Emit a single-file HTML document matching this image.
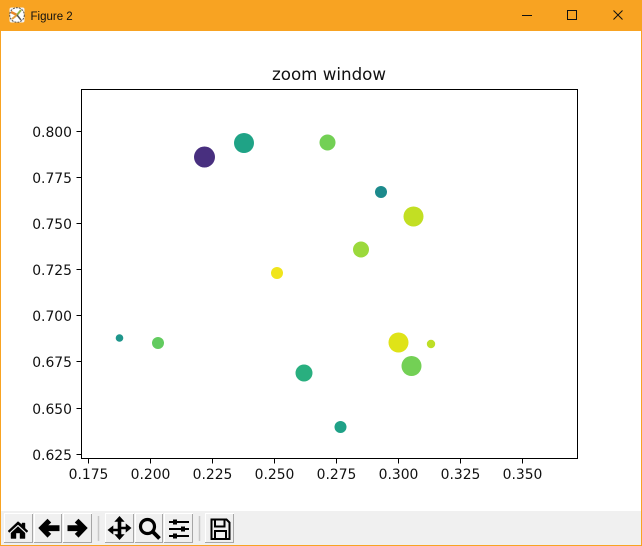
<!DOCTYPE html>
<html><head><meta charset="utf-8"><style>
html,body{margin:0;padding:0;background:#fff;width:642px;height:546px;overflow:hidden}
svg{display:block}
text{font-family:"DejaVu Sans",sans-serif;fill:#111}
</style></head><body>
<svg width="642" height="546" viewBox="0 0 642 546" xmlns="http://www.w3.org/2000/svg">
<rect width="642" height="546" fill="#fff"/>
<rect width="642" height="31" fill="#f8a322"/>
<!-- window icon -->
<g>
<rect x="9.500" y="7.500" width="15" height="15" rx="2" fill="#f4f4f4"/>
<circle cx="17" cy="15" r="7.300" fill="#fff" stroke="#555" stroke-width="1" stroke-dasharray="2 1"/>
<path d="M17 15L11 12" stroke="#e8862a" stroke-width="2.500"/>
<path d="M17 15L21 10" stroke="#8fb04a" stroke-width="2"/>
<path d="M17 15L12 19" stroke="#e0a040" stroke-width="2"/>
<path d="M17 15L21 20" stroke="#555" stroke-width="1.500"/>
</g>
<text x="30.500" y="20" style="font-family:'Liberation Sans',sans-serif;font-size:11.500px" fill="#1a1a00">Figure 2</text>
<!-- window controls -->
<path d="M522 15.500H532" stroke="#111" stroke-width="1"/>
<rect x="567.500" y="10.500" width="9" height="9" fill="none" stroke="#111" stroke-width="1"/>
<path d="M613.500 10.500L622.500 19.500M622.500 10.500L613.500 19.500" stroke="#111" stroke-width="1"/>
<!-- plot -->
<text x="329" y="80" text-anchor="middle" font-size="16.700">zoom window</text>
<rect x="81.500" y="89.500" width="496" height="369" fill="#fff" stroke="#000" stroke-width="1"/>
<g stroke="#000" stroke-width="1">
<path d="M88.500 458.500v5M150.500 458.500v5M212.500 458.500v5M274.500 458.500v5M336.500 458.500v5M398.500 458.500v5M460.500 458.500v5M522.500 458.500v5"/>
<path d="M81.500 131.500h-5M81.500 177.500h-5M81.500 223.500h-5M81.500 269.500h-5M81.500 315.500h-5M81.500 361.500h-5M81.500 408.500h-5M81.500 454.500h-5"/>
</g>
<g font-size="13.900" text-anchor="middle">
<text x="88.500" y="479">0.175</text><text x="150.500" y="479">0.200</text><text x="212.500" y="479">0.225</text><text x="274.500" y="479">0.250</text><text x="336.500" y="479">0.275</text><text x="398.500" y="479">0.300</text><text x="460.500" y="479">0.325</text><text x="522.500" y="479">0.350</text>
</g>
<g font-size="13.900" text-anchor="end">
<text x="72" y="137">0.800</text><text x="72" y="183">0.775</text><text x="72" y="229">0.750</text><text x="72" y="275">0.725</text><text x="72" y="321">0.700</text><text x="72" y="367">0.675</text><text x="72" y="414">0.650</text><text x="72" y="460">0.625</text>
</g>
<!-- points -->
<circle cx="204.500" cy="157" r="10.500" fill="#482f7f"/>
<circle cx="244" cy="143" r="10" fill="#1fa386"/>
<circle cx="327.500" cy="142.500" r="8" fill="#73d055"/>
<circle cx="381" cy="192" r="6" fill="#1c8a8c"/>
<circle cx="413.500" cy="216.500" r="10" fill="#c2df23"/>
<circle cx="361" cy="249.500" r="8" fill="#9bd93c"/>
<circle cx="277" cy="273" r="6" fill="#f0e51c"/>
<circle cx="119.500" cy="338" r="3.800" fill="#1f968b"/>
<circle cx="158" cy="343" r="6" fill="#62cb5f"/>
<circle cx="398.500" cy="342.500" r="10" fill="#dfe318"/>
<circle cx="431" cy="344" r="4.200" fill="#bddf26"/>
<circle cx="411.500" cy="366" r="10" fill="#73d055"/>
<circle cx="304" cy="373" r="8.500" fill="#29af7f"/>
<circle cx="340.500" cy="427" r="6" fill="#1fa187"/>
<!-- toolbar -->
<rect x="0" y="511" width="642" height="35" fill="#f0f0f0"/>
<rect x="0" y="0" width="1" height="546" fill="#f8a322"/>
<rect x="641" y="0" width="1" height="546" fill="#f8a322"/>
<rect x="0" y="545" width="642" height="1" fill="#f8a322"/>
<!-- raised buttons: white top/left, grey bottom/right -->
<g fill="none" stroke-width="1">
<g stroke="#fff">
<path d="M4.500 542V513.500H33M34.500 542V513.500H62M63.500 542V513.500H92M105.500 542V513.500H134M135.500 542V513.500H163M164.500 542V513.500H193M205.500 542V513.500H234"/>
</g>
<g stroke="#a6a6a6">
<path d="M4 542.500H32.500V514M34 542.500H61.500V514M63 542.500H91.500V514M105 542.500H133.500V514M135 542.500H162.500V514M164 542.500H192.500V514M205 542.500H233.500V514"/>
</g>
</g>
<path d="M98.500 516v25M199.500 516v25" stroke="#c8c8c8" stroke-width="1.500"/>
<!-- home -->
<path d="M18 521.500L8 531l1.300 1.500L18 524.500l8.700 8L28 531l-3-2.800V523h-3v1.800zM11 533v5.500h5v-5.500h4v5.500h5V533l-7-6.500z" fill="#000" stroke="#000" stroke-width=".4"/>
<!-- back -->
<path d="M39 528l8.500-8.500 3 3-3.500 3.300h12v4.800H47l3.500 3.300-3 3z" fill="#000" stroke="#000" stroke-width="1"/>
<!-- forward -->
<path d="M87 528l-8.500-8.500-3 3 3.500 3.300H68v4.800h11l-3.500 3.300 3 3z" fill="#000" stroke="#000" stroke-width="1"/>
<!-- move -->
<path d="M119.500 518l4.500 5h-3v5.500h5v-3l5 4-5 4v-3h-5v5.500h3l-4.500 5-4.500-5h3V532.500h-5v3l-5-4 5-4v3h5V523h-3z" fill="#000" stroke="#000" stroke-width=".6" transform="translate(0 -1.500)"/>
<!-- zoom -->
<circle cx="147.500" cy="526.500" r="7" fill="none" stroke="#000" stroke-width="3.200"/>
<path d="M152.500 531.500l7 7" stroke="#000" stroke-width="3.800"/>
<!-- sliders -->
<g fill="#000">
<rect x="169" y="521" width="20" height="2"/><rect x="169" y="528" width="20" height="2"/><rect x="169" y="535" width="20" height="2"/>
<rect x="173" y="519.500" width="4" height="5"/><rect x="181" y="526.500" width="4" height="5"/><rect x="173" y="533.500" width="4" height="5"/>
</g>
<!-- save -->
<path d="M211.500 519.500h15l3 3v16.500h-18z" fill="none" stroke="#000" stroke-width="2"/>
<path d="M215 520v6.500h9.500V520M215 539v-8h11v8" fill="none" stroke="#000" stroke-width="2"/>
</svg>
</body></html>
